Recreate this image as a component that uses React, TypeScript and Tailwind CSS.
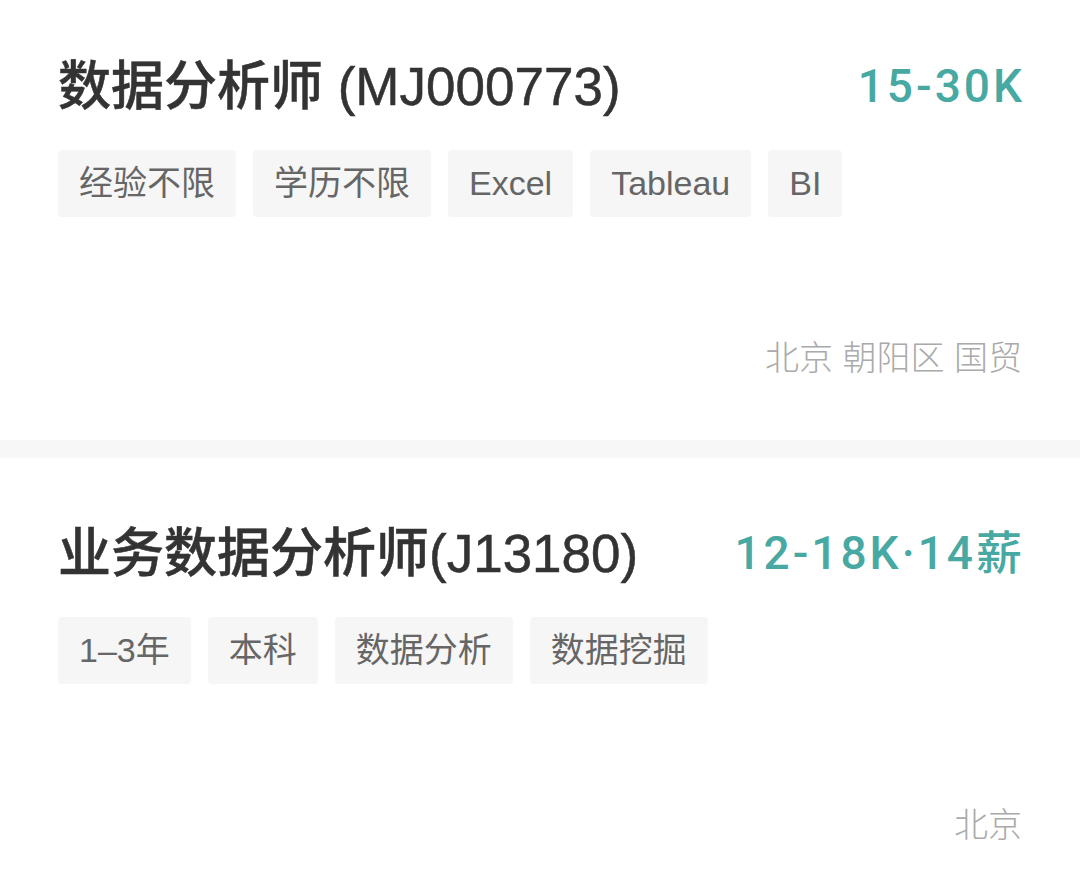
import React from 'react';

type Job = {
  title: string;
  salary: string;
  tags: string[];
  location: string;
};

const jobs: Job[] = [
  {
    title: '数据分析师 (MJ000773)',
    salary: '15-30K',
    tags: ['经验不限', '学历不限', 'Excel', 'Tableau', 'BI'],
    location: '北京 朝阳区 国贸',
  },
  {
    title: '业务数据分析师(J13180)',
    salary: '12-18K·14薪',
    tags: ['1–3年', '本科', '数据分析', '数据挖掘'],
    location: '北京',
  },
];

const font = {
  fontFamily: '"Liberation Sans", "Noto Sans CJK SC", sans-serif',
};

const JobCard = ({ job, first }: { job: Job; first: boolean }) => (
  <div className={`bg-white px-[58px] ${first ? 'pt-[56px] pb-[62px]' : 'pt-[65px] pb-[47px]'}`}>
    <div className="flex h-[60px] items-center justify-between">
      <h2 className="text-[53px] font-medium leading-none text-[#333333] [-webkit-text-stroke:0.5px_#333333]">
        {job.title}
      </h2>
      <span
        className="-mr-[3px] text-[46px] font-medium leading-none tracking-[3px] text-[#48a9a3]"
        style={{ fontFamily: 'Roboto, "Noto Sans CJK SC", sans-serif' }}
      >
        {job.salary}
      </span>
    </div>
    <div className="mt-[34px] flex gap-[17px]">
      {job.tags.map((tag) => (
        <span
          key={tag}
          className="flex h-[67px] items-center rounded-[4px] bg-[#f6f6f6] px-[21px] text-[34px] text-[#666666]"
        >
          {tag}
        </span>
      ))}
    </div>
    <div className="mt-[121px] flex h-[40px] items-center justify-end text-[34px] font-light text-[#aaaaaa]">
      {job.location}
    </div>
  </div>
);

export default function App() {
  return (
    <div className="h-[892px] w-[1080px] overflow-hidden bg-white" style={font}>
      {jobs.map((job, i) => (
        <React.Fragment key={job.title}>
          {i > 0 && <div className="h-[18px] bg-[#f7f7f7]" />}
          <JobCard job={job} first={i === 0} />
        </React.Fragment>
      ))}
    </div>
  );
}
